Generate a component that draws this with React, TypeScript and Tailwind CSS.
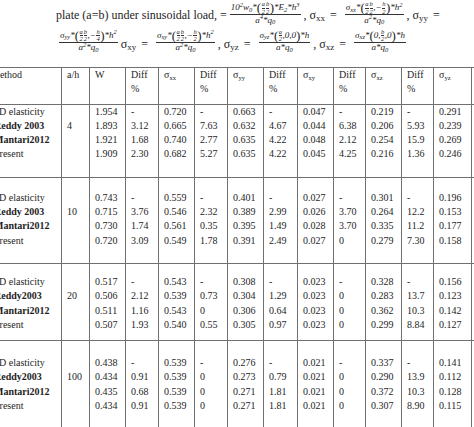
import React from 'react'

// geometry measured from the reference, in px
const COLS = 'grid-cols-[71px_28px_36px_33px_36px_33px_36px_34px_36px_32px_36px_32px_38px_40px]'

function Mini({ n, d }: { n: string; d: string }) {
  return (
    <span className="inline-flex flex-col items-center align-middle mx-[0.5px] text-[6.5px] leading-[6.5px]">
      <span>{n}</span>
      <span className="w-full border-t-[0.5px] border-[#333]" />
      <span>{d}</span>
    </span>
  )
}

function Frac({ num, den }: { num: React.ReactNode; den: React.ReactNode }) {
  return (
    <span className="inline-flex flex-col items-center mx-[3px] italic text-[9px]">
      <span className="px-[1px] h-[12px] flex items-center whitespace-nowrap">{num}</span>
      <span className="w-full border-t border-[#333]" />
      <span className="h-[11px] flex items-center whitespace-nowrap">{den}</span>
    </span>
  )
}

function Sig({ s }: { s: string }) {
  return (
    <span className="not-italic whitespace-nowrap">
      σ<sub className="text-[9px]">{s}</sub>
    </span>
  )
}

function Paren({ children }: { children: React.ReactNode }) {
  return (
    <span className="inline-flex items-center">
      <span className="text-[13px] not-italic leading-[12px]">(</span>
      {children}
      <span className="text-[13px] not-italic leading-[12px]">)</span>
    </span>
  )
}

function Eq() {
  return <span className="mx-[5px]">=</span>
}

const s6 = 'text-[6.5px]'

const groups = [
  {
    ah: '4',
    pad: 'pt-0 pb-[15px]',
    methods: ['3D elasticity', 'Reddy 2003', 'Mantari2012', 'Present'],
    cols: [
      ['1.954', '1.893', '1.921', '1.909'],
      ['-', '3.12', '1.68', '2.30'],
      ['0.720', '0.665', '0.740', '0.682'],
      ['-', '7.63', '2.77', '5.27'],
      ['0.663', '0.632', '0.635', '0.635'],
      ['-', '4.67', '4.22', '4.22'],
      ['0.047', '0.044', '0.048', '0.045'],
      ['-', '6.38', '2.12', '4.25'],
      ['0.219', '0.206', '0.254', '0.216'],
      ['-', '5.93', '15.9', '1.36'],
      ['0.291', '0.239', '0.269', '0.246'],
    ],
  },
  {
    ah: '10',
    pad: 'pt-[13px] pb-[15px]',
    methods: ['3D elasticity', 'Reddy 2003', 'Mantari2012', 'Present'],
    cols: [
      ['0.743', '0.715', '0.730', '0.720'],
      ['-', '3.76', '1.74', '3.09'],
      ['0.559', '0.546', '0.561', '0.549'],
      ['-', '2.32', '0.35', '1.78'],
      ['0.401', '0.389', '0.395', '0.391'],
      ['-', '2.99', '1.49', '2.49'],
      ['0.027', '0.026', '0.028', '0.027'],
      ['-', '3.70', '3.70', '0'],
      ['0.301', '0.264', '0.335', '0.279'],
      ['-', '12.2', '11.2', '7.30'],
      ['0.196', '0.153', '0.177', '0.158'],
    ],
  },
  {
    ah: '20',
    pad: 'pt-[11px] pb-[8px]',
    methods: ['3D elasticity', 'Reddy2003', 'Mantari2012', 'Present'],
    cols: [
      ['0.517', '0.506', '0.511', '0.507'],
      ['-', '2.12', '1.16', '1.93'],
      ['0.543', '0.539', '0.543', '0.540'],
      ['-', '0.73', '0', '0.55'],
      ['0.308', '0.304', '0.306', '0.305'],
      ['-', '1.29', '0.64', '0.97'],
      ['0.023', '0.023', '0.023', '0.023'],
      ['-', '0', '0', '0'],
      ['0.328', '0.283', '0.362', '0.299'],
      ['-', '13.7', '10.3', '8.84'],
      ['0.156', '0.123', '0.142', '0.127'],
    ],
  },
  {
    ah: '100',
    pad: 'pt-[15px] pb-[16px]',
    methods: ['3D elasticity', 'Reddy2003', 'Mantari2012', 'Present'],
    cols: [
      ['0.438', '0.434', '0.435', '0.434'],
      ['-', '0.91', '0.68', '0.91'],
      ['0.539', '0.539', '0.539', '0.539'],
      ['-', '0', '0', '0'],
      ['0.276', '0.273', '0.271', '0.271'],
      ['-', '0.79', '1.81', '1.81'],
      ['0.021', '0.021', '0.021', '0.021'],
      ['-', '0', '0', '0'],
      ['0.337', '0.290', '0.372', '0.307'],
      ['-', '13.9', '10.3', '8.90'],
      ['0.141', '0.112', '0.128', '0.115'],
    ],
  },
]

const cell = 'border-r border-b border-[#707070] pl-[5px] leading-[14.3px]'

function HeaderRow() {
  const sig = (s: string) => (
    <div className={`${cell} pb-[7px]`}>
      σ<sub className="text-[6.5px]">{s}</sub>
    </div>
  )
  const diff = (
    <div className={`${cell} pb-[7px]`}>
      <div>Diff</div>
      <div>%</div>
    </div>
  )
  return (
    <div className={`grid ${COLS}`}>
      <div className={`${cell} !pl-0 pb-[7px]`}>Method</div>
      <div className={`${cell} pl-[4px]`}>a/h</div>
      <div className={cell}>W</div>
      {diff}
      {sig('xx')}
      {diff}
      {sig('yy')}
      {diff}
      {sig('xy')}
      {diff}
      {sig('xz')}
      {diff}
      {sig('yz')}
      <div className={cell} />
    </div>
  )
}

export default function App() {
  return (
    <div className="w-[474px] h-[427px] overflow-hidden bg-white text-[#1e1e1e] font-['Liberation_Serif',serif] text-[10px]">
      {/* caption with the normalisation formulas */}
      <div className="h-[67px] pl-[56px] text-[12px]">
        <div className="h-[28px] flex items-center whitespace-nowrap">
          <span className="mt-[2px]">plate (a=b) under sinusoidal load, =</span>
          <Frac
            num={
              <>
                10<sup className={s6}>2</sup>w<sub className={s6}>0</sub>*
                <Paren>
                  <Mini n="a" d="2" />
                  <Mini n="b" d="2" />
                </Paren>
                *E<sub className={s6}>2</sub>*h<sup className={s6}>3</sup>
              </>
            }
            den={
              <>
                a<sup className={s6}>4</sup>*q<sub className={s6}>0</sub>
              </>
            }
          />
          <span className="mt-[2px] flex items-center">
            <span>,</span>
            <span className="ml-[3px]">
              <Sig s="xx" />
            </span>
            <Eq />
          </span>
          <Frac
            num={
              <>
                σ<sub className={s6}>xx</sub>*
                <Paren>
                  <Mini n="a" d="2" />
                  <Mini n="b" d="2" />
                  ,−
                  <Mini n="h" d="2" />
                </Paren>
                *h<sup className={s6}>2</sup>
              </>
            }
            den={
              <>
                a<sup className={s6}>2</sup>*q<sub className={s6}>0</sub>
              </>
            }
          />
          <span className="mt-[2px] flex items-center">
            <span>,</span>
            <span className="ml-[3px]">
              <Sig s="yy" />
            </span>
            <Eq />
          </span>
        </div>
        <div className="h-[27px] flex items-center whitespace-nowrap">
          <Frac
            num={
              <>
                σ<sub className={s6}>yy</sub>*
                <Paren>
                  <Mini n="a" d="2" />
                  <Mini n="b" d="2" />
                  ,−
                  <Mini n="h" d="4" />
                </Paren>
                *h<sup className={s6}>2</sup>
              </>
            }
            den={
              <>
                a<sup className={s6}>2</sup>*q<sub className={s6}>0</sub>
              </>
            }
          />
          <span className="mt-[4px] flex items-center">
            <Sig s="xy" />
            <Eq />
          </span>
          <Frac
            num={
              <>
                σ<sub className={s6}>xy</sub>*
                <Paren>
                  <Mini n="a" d="2" />
                  <Mini n="b" d="2" />
                  ,−
                  <Mini n="h" d="2" />
                </Paren>
                *h<sup className={s6}>2</sup>
              </>
            }
            den={
              <>
                a<sup className={s6}>2</sup>*q<sub className={s6}>0</sub>
              </>
            }
          />
          <span className="mt-[4px] flex items-center">
            <span>,</span>
            <span className="ml-[3px]">
              <Sig s="yz" />
            </span>
            <Eq />
          </span>
          <Frac
            num={
              <>
                σ<sub className={s6}>yz</sub>*
                <Paren>
                  <Mini n="a" d="2" />
                  ,0,0
                </Paren>
                *h
              </>
            }
            den={
              <>
                a*q<sub className={s6}>0</sub>
              </>
            }
          />
          <span className="mt-[4px] flex items-center">
            <span>,</span>
            <span className="ml-[3px]">
              <Sig s="xz" />
            </span>
            <Eq />
          </span>
          <Frac
            num={
              <>
                σ<sub className={s6}>xz</sub>*
                <Paren>
                  0,
                  <Mini n="b" d="2" />
                  ,0
                </Paren>
                *h
              </>
            }
            den={
              <>
                a*q<sub className={s6}>0</sub>
              </>
            }
          />
        </div>
      </div>

      {/* results table */}
      <div className="-ml-[10px] w-[520px] border-t border-l border-[#707070]">
        <HeaderRow />
        {groups.map((g) => (
          <div key={g.ah} className={`grid ${COLS}`}>
            <div className={`${cell} ${g.pad} !pl-[3px] whitespace-nowrap`}>
              {g.methods.map((m, i) => (
                <div key={m} className={i === 1 || i === 2 ? 'font-bold' : ''}>
                  {m}
                </div>
              ))}
            </div>
            <div className={`${cell} ${g.pad} pl-[4px]`}>
              <div>&nbsp;</div>
              <div>{g.ah}</div>
            </div>
            {g.cols.map((c, ci) => (
              <div key={ci} className={`${cell} ${g.pad}`}>
                {c.map((v, vi) => (
                  <div key={vi}>{v}</div>
                ))}
              </div>
            ))}
            <div className={cell} />
          </div>
        ))}
      </div>
    </div>
  )
}
